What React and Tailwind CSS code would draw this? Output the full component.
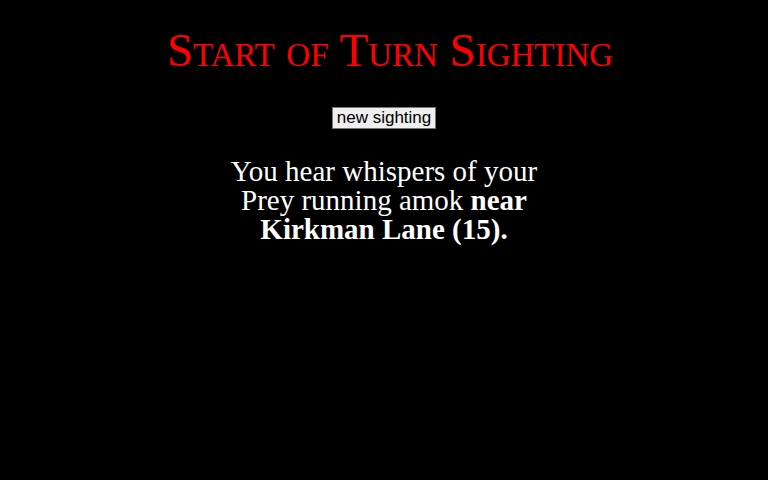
export default function App() {
  return (
    <div className="min-h-[480px] w-full bg-black flex flex-col items-center">
      <h1 className="mt-[23px] ml-[12px] text-[47px] leading-[54px] text-[#ff0000] [font-variant:small-caps] font-['Liberation_Serif',serif]">
        Start of Turn Sighting
      </h1>
      <button className="mt-[30px] bg-[#efefef] border border-[#767676] px-[4px] py-0 text-[17px] leading-[20px] text-black font-['Liberation_Sans',Arial,sans-serif]">
        new sighting
      </button>
      <p className="mt-[28px] w-[320px] text-center text-white text-[29px] leading-[29px] font-['Liberation_Serif',serif]">
        You hear whispers of your Prey running amok <b>near Kirkman Lane (15).</b>
      </p>
    </div>
  );
}
